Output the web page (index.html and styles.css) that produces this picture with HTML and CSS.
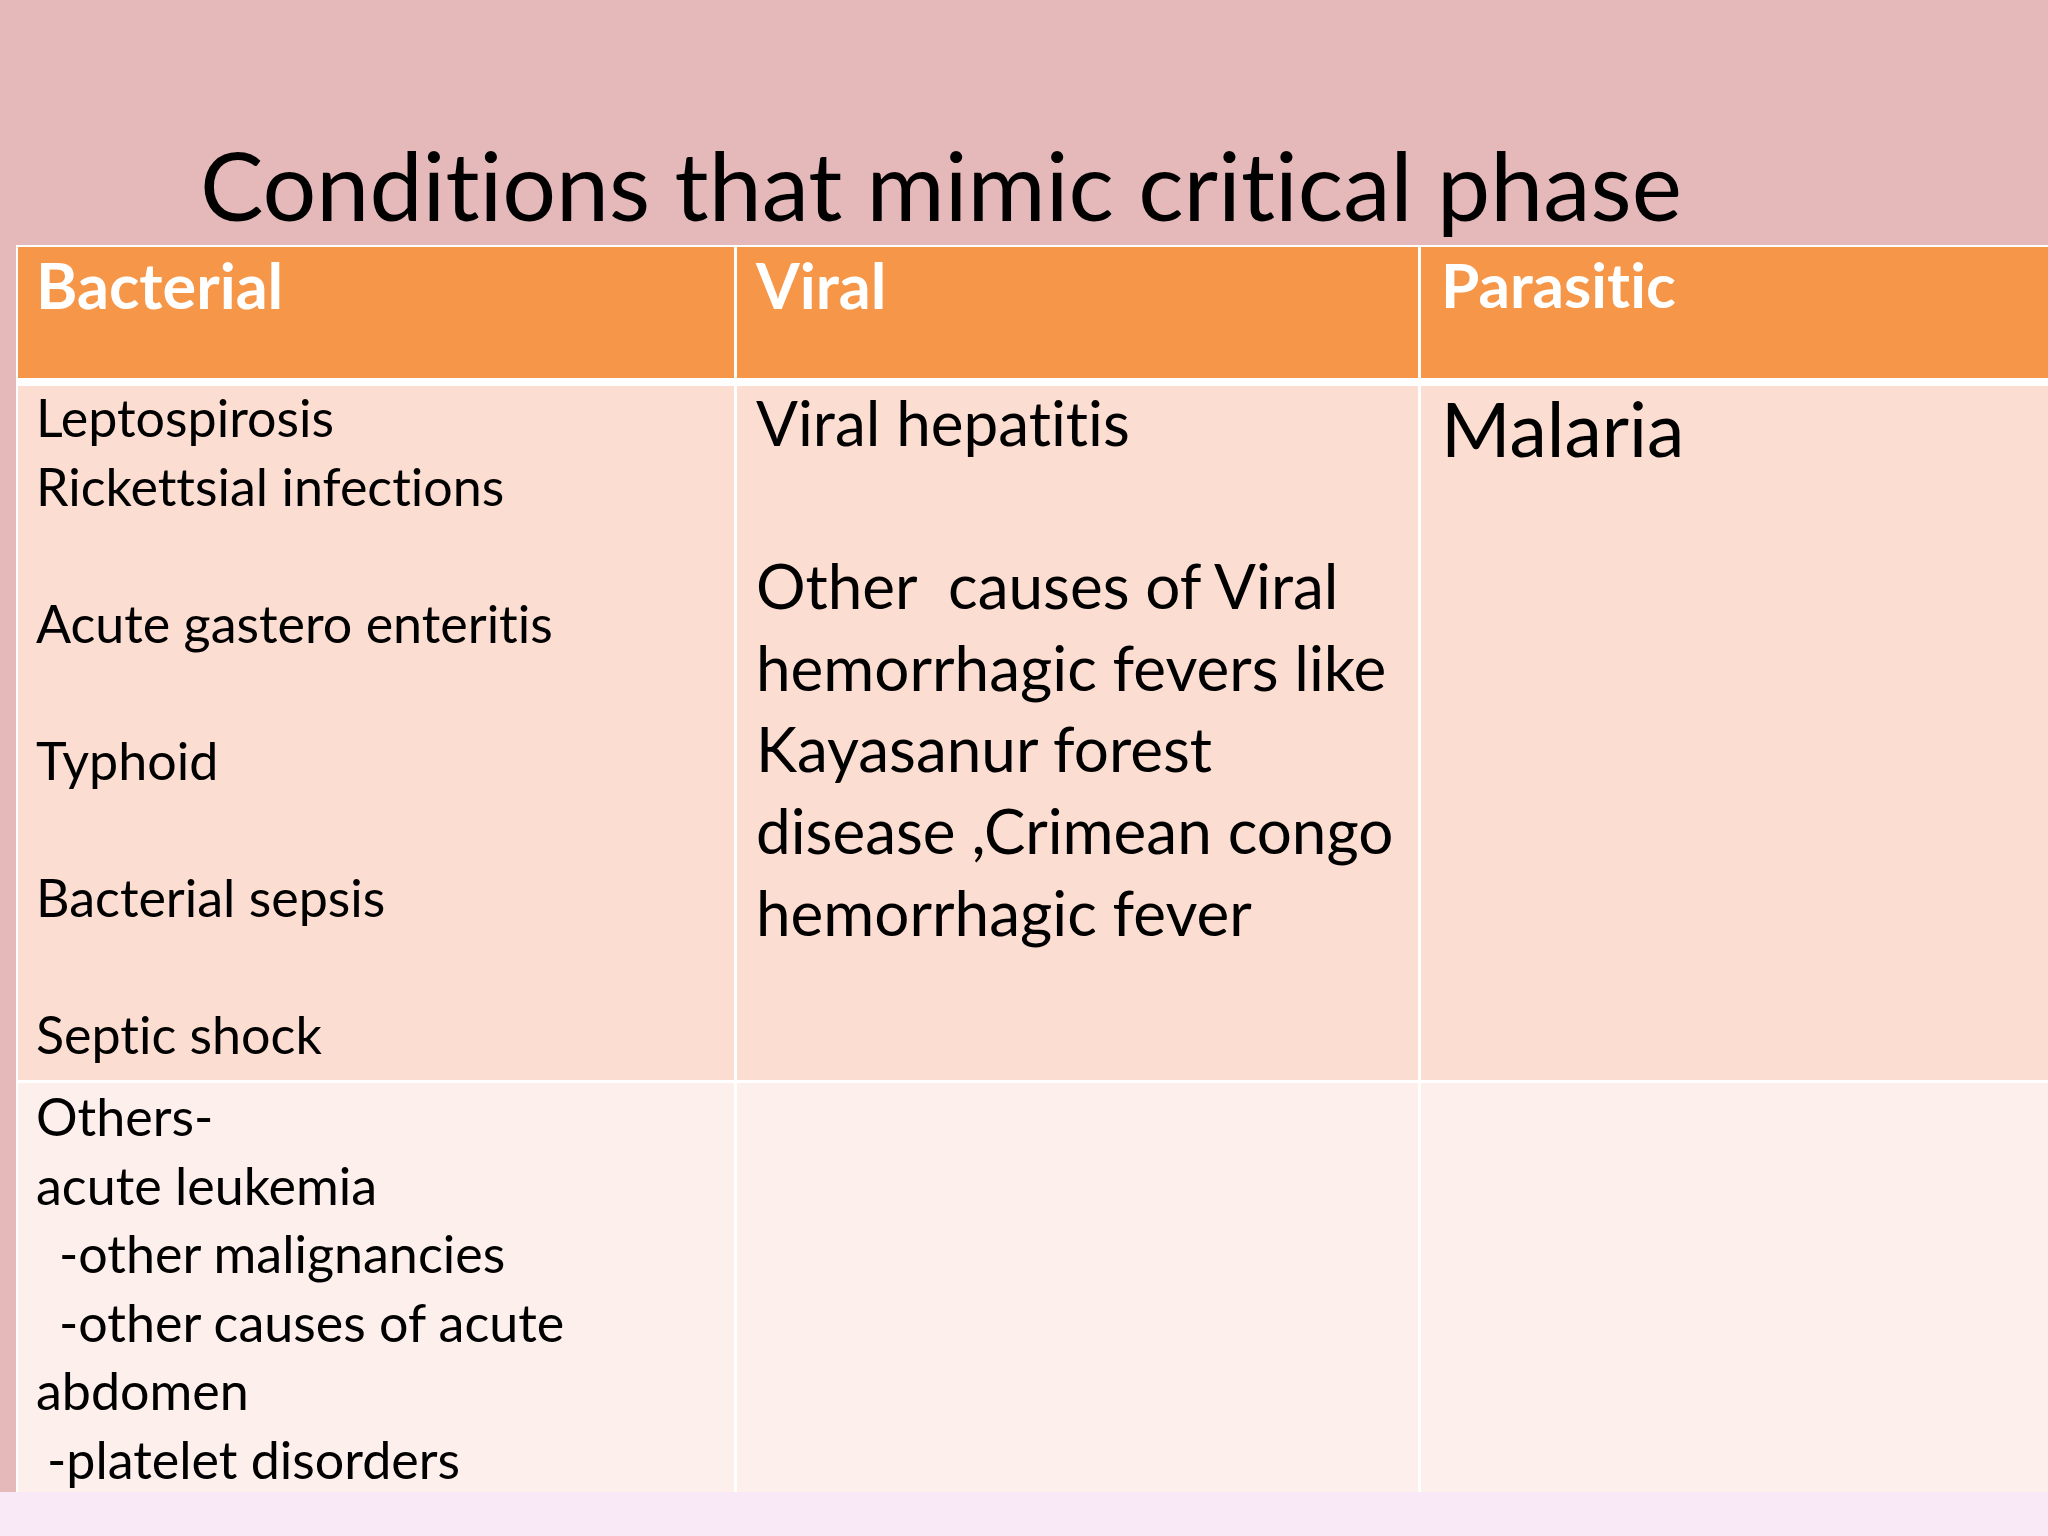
FILE: index.html
```html
<!DOCTYPE html>
<html lang="en">
<head>
<meta charset="utf-8">
<title>Conditions that mimic critical phase</title>
<link rel="stylesheet" href="styles.css">
</head>
<body>
<div class="slide">
  <h1 class="title">Conditions that mimic critical phase</h1>
  <div class="table">
    <div class="cell head">Bacterial</div>
    <div class="cell head">Viral</div>
    <div class="cell head">Parasitic</div>

    <div class="cell band1">
      <div class="lines small">
        <div class="ln">Leptospirosis</div>
        <div class="ln">Rickettsial infections</div>
        <div class="ln blank"></div>
        <div class="ln">Acute gastero enteritis</div>
        <div class="ln blank"></div>
        <div class="ln">Typhoid</div>
        <div class="ln blank"></div>
        <div class="ln">Bacterial sepsis</div>
        <div class="ln blank"></div>
        <div class="ln">Septic shock</div>
      </div>
    </div>
    <div class="cell band1">
      <div class="lines medium">
        <div class="ln">Viral hepatitis</div>
        <div class="ln blank"></div>
        <div class="ln">Other&nbsp; causes of Viral</div>
        <div class="ln">hemorrhagic fevers like</div>
        <div class="ln">Kayasanur forest</div>
        <div class="ln">disease ,Crimean congo</div>
        <div class="ln">hemorrhagic fever</div>
      </div>
    </div>
    <div class="cell band1">
      <div class="lines large">
        <div class="ln">Malaria</div>
      </div>
    </div>

    <div class="cell band2">
      <div class="lines small">
        <div class="ln">Others-</div>
        <div class="ln">acute leukemia</div>
        <div class="ln ind2">-other malignancies</div>
        <div class="ln ind2">-other causes of acute</div>
        <div class="ln">abdomen</div>
        <div class="ln ind1">-platelet disorders</div>
      </div>
    </div>
    <div class="cell band2"></div>
    <div class="cell band2"></div>
  </div>
  <div class="footer"></div>
</div>
</body>
</html>
```
FILE: styles.css
```css
html, body {
  margin: 0;
  padding: 0;
}
body {
  width: 2048px;
  height: 1536px;
  overflow: hidden;
  background: #e5b8b9;
  font-family: Lato, "Liberation Sans", sans-serif;
  font-variant-ligatures: none;
  font-feature-settings: "liga" 0, "clig" 0;
  color: #000;
}
.slide {
  width: 2048px;
  height: 1536px;
  display: flex;
  flex-direction: column;
  overflow: hidden;
}
.title {
  margin: 0;
  padding: 131px 0 0 200px;
  height: 106px;
  font-weight: 400;
  font-size: 95px;
  line-height: 107px;
  white-space: nowrap;
  color: #000;
}
.table {
  margin: 8px 0 0 16px;
  width: 2110px;
  flex: none;
  display: grid;
  grid-template-columns: 716px 681px 700px;
  grid-template-rows: 136px 694px 409px;
  column-gap: 3px;
  row-gap: 3px;
  background: #ffffff;
  border-top: 2px solid #ffffff;
  border-left: 2px solid #ffffff;
}
.cell {
  padding-left: 18px;
}
.cell:nth-child(3n+2) {
  padding-left: 19px;
}
.cell:nth-child(3n) {
  padding-left: 20px;
}
.head {
  height: 131px;
  background: #f69648;
  color: #ffffff;
  font-weight: 700;
  font-size: 63px;
  line-height: 73px;
  padding-top: 1px;
  box-sizing: border-box;
}
.head:nth-child(3) {
  font-size: 62px;
}
.band1 {
  background: #fbddd1;
}
.band2 {
  background: #fdefeb;
}
.lines {
  white-space: nowrap;
}
.lines.small {
  font-size: 52px;
  line-height: 68.6px;
  margin-top: -3px;
}
.lines.medium {
  font-size: 62px;
  line-height: 81.6px;
  margin-top: -4px;
}
.lines.large {
  font-size: 75px;
  line-height: 84px;
  margin-top: 0;
}
.band2 .lines.small {
  margin-top: -1px;
}
.lines.small .ln.blank { height: 68.6px; }
.lines.medium .ln.blank { height: 81.6px; }
.ind1 { padding-left: 11px; }
.ind2 { padding-left: 23px; }
.footer {
  flex: 1;
  background: #f9e9f7;
}
```
